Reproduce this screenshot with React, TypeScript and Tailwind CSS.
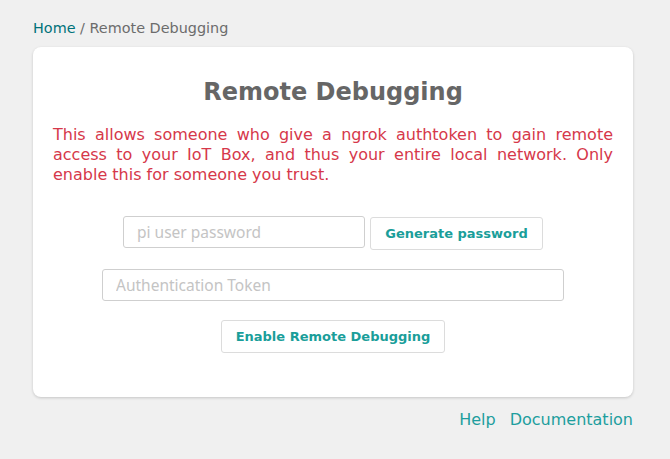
export default function App() {
  return (
    <div className="min-h-[459px] bg-[#f0f0f0] pt-[19px] font-['DejaVu_Sans',sans-serif]">
      <div className="ml-[33px] w-[600px]">
        <nav className="text-[14.4px] leading-[18px] text-[#6c6c6c]">
          <a href="#" className="text-[#00727a]">Home</a> / Remote Debugging
        </nav>
        <div className="mt-[10px] rounded-lg bg-white px-5 pb-[44px] shadow-[0_1px_3px_rgba(0,0,0,0.18)]">
          <div className="pt-[31px]">
            <h2 className="text-center text-[24px] font-bold leading-[29px] text-[#666666]">Remote Debugging</h2>
            <p className="mt-[18px] text-justify text-[16px] leading-[20px] text-[#d6384a]">
              This allows someone who give a ngrok authtoken to gain remote access to your IoT Box, and thus your entire local network. Only enable this for someone you trust.
            </p>
            <div className="mt-[31px] flex flex-col items-center">
              <div className="flex items-start gap-[5px]">
                <input
                  placeholder="pi user password"
                  className="h-[32px] w-[242px] rounded-[3px] border border-[#cfcfcf] px-[13px] font-['Noto_Sans',sans-serif] text-[15.5px] outline-none placeholder:text-[#c4c4c4]"
                />
                <button className="mt-px h-[33px] w-[173px] rounded-[3px] border border-[#dcdcdc] bg-white text-[13px] font-bold text-[#1a9e9a]">
                  Generate password
                </button>
              </div>
              <input
                placeholder="Authentication Token"
                className="mt-[19px] h-[32px] w-[462px] rounded-[3px] border border-[#cfcfcf] px-[13px] font-['Noto_Sans',sans-serif] text-[15.5px] outline-none placeholder:text-[#c4c4c4]"
              />
              <button className="mt-[19px] h-[33px] w-[224px] rounded-[3px] border border-[#dcdcdc] bg-white text-[13px] font-bold text-[#1a9e9a]">
                Enable Remote Debugging
              </button>
            </div>
          </div>
        </div>
        <div className="mt-[13px] flex justify-end gap-[14px] text-[16px] leading-[20px] text-[#1d9e9e]">
          <a href="#">Help</a>
          <a href="#">Documentation</a>
        </div>
      </div>
    </div>
  );
}
